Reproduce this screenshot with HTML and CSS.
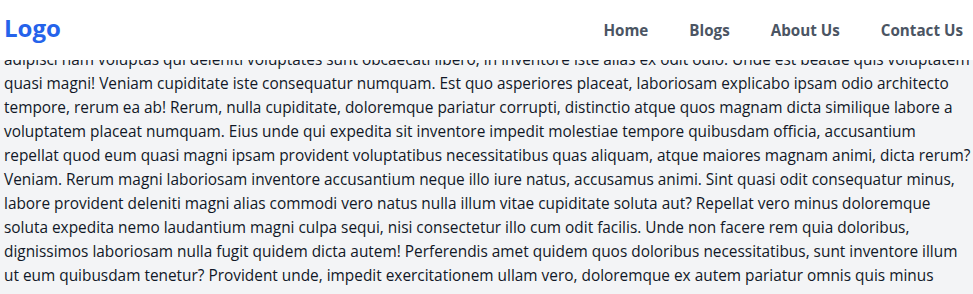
FILE: index.html
```html
<!DOCTYPE html>
<html lang="en">
<head>
<meta charset="utf-8">
<title>Logo</title>
<link rel="stylesheet" href="styles.css">
</head>
<body>
<header class="site-header">
  <a class="logo" href="#">Logo</a>
  <nav class="nav">
    <a class="nav-link" href="#">Home</a>
    <a class="nav-link" href="#">Blogs</a>
    <a class="nav-link" href="#">About Us</a>
    <a class="nav-link" href="#">Contact Us</a>
  </nav>
</header>
<main class="content">
  <p class="text">adipisci nam voluptas qui deleniti voluptates sunt obcaecati libero, in inventore iste alias ex odit odio. Unde est beatae quis voluptatem<br>
quasi magni! Veniam cupiditate iste consequatur numquam. Est quo asperiores placeat, laboriosam explicabo ipsam odio architecto<br>
tempore, rerum ea ab! Rerum, nulla cupiditate, doloremque pariatur corrupti, distinctio atque quos magnam dicta similique labore a<br>
voluptatem placeat numquam. Eius unde qui expedita sit inventore impedit molestiae tempore quibusdam officia, accusantium<br>
repellat quod eum quasi magni ipsam provident voluptatibus necessitatibus quas aliquam, atque maiores magnam animi, dicta rerum?<br>
Veniam. Rerum magni laboriosam inventore accusantium neque illo iure natus, accusamus animi. Sint quasi odit consequatur minus,<br>
labore provident deleniti magni alias commodi vero natus nulla illum vitae cupiditate soluta aut? Repellat vero minus doloremque<br>
soluta expedita nemo laudantium magni culpa sequi, nisi consectetur illo cum odit facilis. Unde non facere rem quia doloribus,<br>
dignissimos laboriosam nulla fugit quidem dicta autem! Perferendis amet quidem quos doloribus necessitatibus, sunt inventore illum<br>
ut eum quibusdam tenetur? Provident unde, impedit exercitationem ullam vero, doloremque ex autem pariatur omnis quis minus</p>
</main>
</body>
</html>
```
FILE: styles.css
```css
* { box-sizing: border-box; }
html, body { margin: 0; padding: 0; }
body {
  background: #f3f4f6;
  font-family: "Open Sans", "Noto Sans", sans-serif;
  color: #111827;
  overflow: hidden;
  height: 294px;
}
.site-header {
  position: fixed;
  top: 0;
  left: 0;
  right: 0;
  height: 60px;
  background: #ffffff;
  display: flex;
  align-items: center;
  justify-content: space-between;
  padding: 0 10px 0 4px;
  z-index: 10;
}
.logo {
  font-size: 24px;
  font-weight: 700;
  color: #2563eb;
  text-decoration: none;
  margin-bottom: 5px;
}
.nav {
  display: flex;
  align-items: center;
  gap: 41px;
}
.nav-link {
  font-size: 15.2px;
  font-weight: 700;
  color: #4b5563;
  text-decoration: none;
}
.content {
  padding: 48px 4px 0 4px;
}
.text {
  margin: 0;
  font-size: 15.4px;
  line-height: 24px;
  white-space: nowrap;
}
```
